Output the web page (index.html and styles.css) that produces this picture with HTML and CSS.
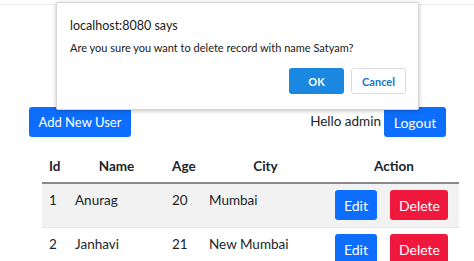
FILE: index.html
```html
<!DOCTYPE html>
<html lang="en">
<head>
    <meta charset="UTF-8">
    <meta name="viewport" content="width=device-width, initial-scale=1.0">
    <title>Users</title>
    <link rel="stylesheet" href="styles.css">
</head>
<body>

    <div class="top-line"></div>

    <!-- Toolbar -->
    <div class="toolbar">
        <button class="btn btn-blue btn-add">Add New User</button>
        <div class="user-box">
            <span class="hello">Hello admin</span>
            <button class="btn btn-blue btn-logout">Logout</button>
        </div>
    </div>

    <!-- Users table -->
    <table class="users">
        <colgroup>
            <col class="c-id">
            <col class="c-name">
            <col class="c-age">
            <col class="c-city">
            <col class="c-action">
        </colgroup>
        <thead>
            <tr>
                <th>Id</th>
                <th>Name</th>
                <th>Age</th>
                <th>City</th>
                <th>Action</th>
            </tr>
        </thead>
        <tbody>
            <tr class="striped">
                <td>1</td>
                <td>Anurag</td>
                <td>20</td>
                <td>Mumbai</td>
                <td class="actions">
                    <button class="btn btn-blue">Edit</button>
                    <button class="btn btn-red">Delete</button>
                </td>
            </tr>
            <tr>
                <td>2</td>
                <td>Janhavi</td>
                <td>21</td>
                <td>New Mumbai</td>
                <td class="actions">
                    <button class="btn btn-blue">Edit</button>
                    <button class="btn btn-red">Delete</button>
                </td>
            </tr>
        </tbody>
    </table>

    <!-- Browser confirm dialog -->
    <div class="dialog">
        <div class="dialog-title">localhost:8080 says</div>
        <div class="dialog-msg">Are you sure you want to delete record with name Satyam?</div>
        <div class="dialog-buttons">
            <button class="dlg-btn dlg-ok">OK</button>
            <button class="dlg-btn dlg-cancel">Cancel</button>
        </div>
    </div>

</body>
</html>
```

FILE: styles.css
```css
/* General */
body {
    margin: 0;
    font-family: Lato, "Open Sans", sans-serif;
    font-size: 13.5px;
    color: #212529;
    background-color: #fff;
    overflow: hidden;
}

.top-line {
    height: 4px;
    border-bottom: 1px solid #ececec;
}

/* Buttons */
.btn {
    font-family: inherit;
    font-size: 14px;
    border: none;
    border-radius: 3px;
    color: #fff;
    height: 30px;
    padding: 0;
    white-space: nowrap;
    cursor: pointer;
}

.btn-blue {
    background-color: #0d6efd;
}

.btn-red {
    background-color: #f0193d;
}

/* Toolbar */
.toolbar {
    display: flex;
    justify-content: space-between;
    align-items: center;
    margin-top: 102px;
    padding: 0 28px 0 29px;
}

.btn-add {
    width: 102px;
    font-size: 13px;
}

.user-box {
    display: flex;
    align-items: center;
    gap: 3px;
}

.hello {
    margin-bottom: 2px;
}

.btn-logout {
    width: 62px;
}

/* Table */
.users {
    margin: 13px 0 0 42px;
    width: 417px;
    border-collapse: collapse;
    table-layout: fixed;
}

.c-id { width: 26px; }
.c-name { width: 97px; }
.c-age { width: 37px; }
.c-city { width: 127px; }
.c-action { width: 130px; }

.users th {
    font-weight: bold;
    text-align: center;
    padding: 8px 7px;
    border-bottom: 2px solid #8a8a8a;
}

.users th:first-child {
    text-align: left;
}

.users td {
    padding: 8px 7px;
    vertical-align: top;
    border-bottom: 1px solid #e6e6e6;
    height: 27px;
}

.users tr.striped td {
    background-color: #f2f2f2;
}

.users td.actions {
    padding: 6px 0 0 6px;
}

.actions .btn-blue {
    width: 42px;
}

.actions .btn-red {
    width: 58px;
    margin-left: 10px;
}

/* Confirm dialog */
.dialog {
    position: absolute;
    left: 56px;
    top: 2px;
    width: 348px;
    height: 94px;
    padding: 0 0 12px 13px;
    background-color: #fff;
    border: 1px solid #d6d6d6;
    border-radius: 2px;
    box-shadow: 0 1px 4px rgba(0, 0, 0, 0.25);
    color: #202020;
}

.dialog-title {
    font-size: 12.5px;
    margin-top: 15px;
}

.dialog-msg {
    font-size: 11px;
    margin-top: 8px;
}

.dialog-buttons {
    display: flex;
    justify-content: flex-end;
    gap: 7px;
    margin-top: 14px;
    padding-right: 12px;
}

.dlg-btn {
    font-family: inherit;
    font-size: 11px;
    font-weight: bold;
    height: 26px;
    border-radius: 3px;
    cursor: pointer;
}

.dlg-ok {
    width: 55px;
    background-color: #1a87e0;
    color: #fff;
    border: none;
}

.dlg-cancel {
    width: 55px;
    background-color: #fff;
    color: #1a73c8;
    border: 1px solid #dcdcdc;
}
```
